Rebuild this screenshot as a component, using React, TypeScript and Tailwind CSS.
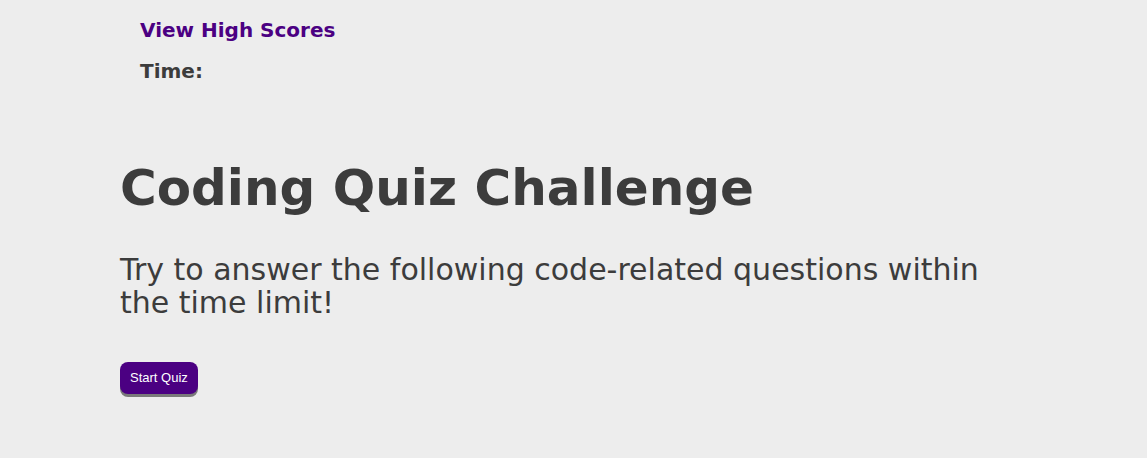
export default function App() {
  return (
    <div className="min-h-[458px] w-full bg-[#ededed] text-[#3c3c3c] font-['DejaVu_Sans',Verdana,sans-serif]">
      <header className="px-[140px] pt-[18px]">
        <a href="#" className="block text-[20px] font-bold leading-[24px] text-[#4b0082]">
          View High Scores
        </a>
        <p className="mt-[17px] text-[20px] font-bold leading-[24px]">Time:</p>
      </header>
      <main className="px-[120px] pt-[75px]">
        <h1 className="text-[50px] font-bold leading-[60px]">Coding Quiz Challenge</h1>
        <p className="mt-[35px] max-w-[900px] text-[30px] leading-[33px]">
          Try to answer the following code-related questions within the time limit!
        </p>
        <button className="mt-[43px] rounded-[8px] bg-[#4b0082] px-[10px] py-[8px] font-['Liberation_Sans',Arial,sans-serif] text-[13px] leading-[16px] text-white shadow-[0_3px_0_#7a7a7a]">
          Start Quiz
        </button>
      </main>
    </div>
  );
}
